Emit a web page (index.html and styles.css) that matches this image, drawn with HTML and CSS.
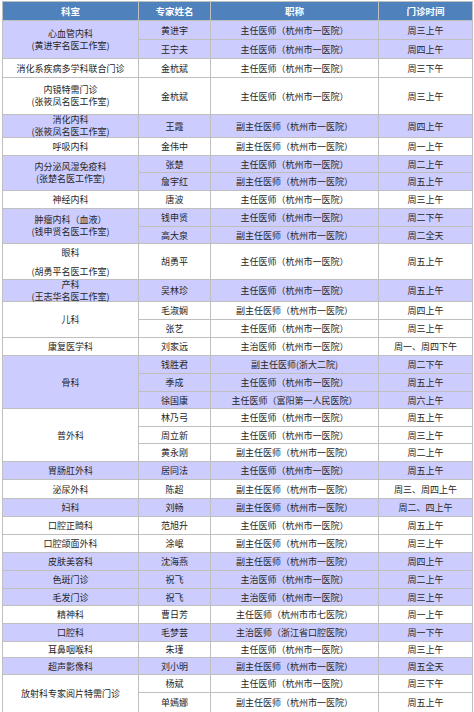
FILE: index.html
```html
<!DOCTYPE html>
<html lang="zh-CN">
<head>
<meta charset="utf-8">
<title>专家门诊时间表</title>
<link rel="stylesheet" href="styles.css">
</head>
<body>
<div class="sheet">
  <div class="c hd">科室</div><div class="c hd">专家姓名</div><div class="c hd">职称</div><div class="c hd">门诊时间</div>

  <div class="c p s2 two">心血管内科<br>(黄进宇名医工作室)</div><div class="c p">黄进宇</div><div class="c p">主任医师（杭州市一医院）</div><div class="c p">周三上午</div>
  <div class="c p">王宁夫</div><div class="c p">主任医师（杭州市一医院）</div><div class="c p">周四上午</div>

  <div class="c w">消化系疾病多学科联合门诊</div><div class="c w">金杭斌</div><div class="c w">主任医师（杭州市一医院）</div><div class="c w">周三下午</div>

  <div class="c w two">内镜特需门诊<br>(张筱凤名医工作室)</div><div class="c w">金杭斌</div><div class="c w">主任医师（杭州市一医院）</div><div class="c w">周三上午</div>

  <div class="c p two">消化内科<br>(张筱凤名医工作室)</div><div class="c p">王霞</div><div class="c p">副主任医师（杭州市一医院）</div><div class="c p">周四上午</div>

  <div class="c w">呼吸内科</div><div class="c w">金伟中</div><div class="c w">副主任医师（杭州市一医院）</div><div class="c w">周一上午</div>

  <div class="c p s2 two">内分泌风湿免疫科<br>(张楚名医工作室)</div><div class="c p">张楚</div><div class="c p">主任医师（杭州市一医院）</div><div class="c p">周二上午</div>
  <div class="c p">詹宇红</div><div class="c p">副主任医师（杭州市一医院）</div><div class="c p">周五上午</div>

  <div class="c w">神经内科</div><div class="c w">唐波</div><div class="c w">主任医师（杭州市一医院）</div><div class="c w">周三上午</div>

  <div class="c p s2 two">肿瘤内科（血液）<br>(钱申贤名医工作室)</div><div class="c p">钱申贤</div><div class="c p">主任医师（杭州市一医院）</div><div class="c p">周二下午</div>
  <div class="c p">高大泉</div><div class="c p">副主任医师（杭州市一医院）</div><div class="c p">周二全天</div>

  <div class="c w two wide">眼科<br>(胡勇平名医工作室)</div><div class="c w">胡勇平</div><div class="c w">主任医师（杭州市一医院）</div><div class="c w">周五上午</div>

  <div class="c p two">产科<br>(王志华名医工作室)</div><div class="c p">吴林珍</div><div class="c p">主任医师（杭州市一医院）</div><div class="c p">周五上午</div>

  <div class="c w s2">儿科</div><div class="c w">毛淑娴</div><div class="c w">副主任医师（杭州市一医院）</div><div class="c w">周四上午</div>
  <div class="c w">张艺</div><div class="c w">主任医师（杭州市一医院）</div><div class="c w">周三上午</div>

  <div class="c w">康复医学科</div><div class="c w">刘家远</div><div class="c w">主治医师（杭州市一医院）</div><div class="c w">周一、周四下午</div>

  <div class="c p s3">骨科</div><div class="c p">钱胜君</div><div class="c p">副主任医师(浙大二院)</div><div class="c p">周二下午</div>
  <div class="c p">季成</div><div class="c p">主任医师（杭州市一医院）</div><div class="c p">周五上午</div>
  <div class="c p">徐国康</div><div class="c p">主任医师（富阳第一人民医院）</div><div class="c p">周六上午</div>

  <div class="c w s3">普外科</div><div class="c w">林乃弓</div><div class="c w">主任医师（杭州市一医院）</div><div class="c w">周五上午</div>
  <div class="c w">周立新</div><div class="c w">主任医师（杭州市一医院）</div><div class="c w">周三上午</div>
  <div class="c w">黄永刚</div><div class="c w">副主任医师（杭州市一医院）</div><div class="c w">周二上午</div>

  <div class="c p">胃肠肛外科</div><div class="c p">居同法</div><div class="c p">主任医师（杭州市一医院）</div><div class="c p">周五上午</div>

  <div class="c w">泌尿外科</div><div class="c w">陈超</div><div class="c w">副主任医师（杭州市一医院）</div><div class="c w">周三、周四上午</div>

  <div class="c p">妇科</div><div class="c p">刘畅</div><div class="c p">副主任医师（杭州市一医院）</div><div class="c p">周二、四上午</div>

  <div class="c w">口腔正畸科</div><div class="c w">范旭升</div><div class="c w">主任医师（杭州市一医院）</div><div class="c w">周五上午</div>

  <div class="c w">口腔颌面外科</div><div class="c w">涂岷</div><div class="c w">副主任医师（杭州市一医院）</div><div class="c w">周三上午</div>

  <div class="c p">皮肤美容科</div><div class="c p">沈海燕</div><div class="c p">副主任医师（杭州市一医院）</div><div class="c p">周四上午</div>

  <div class="c p">色斑门诊</div><div class="c p">祝飞</div><div class="c p">主治医师（杭州市一医院）</div><div class="c p">周二上午</div>

  <div class="c p">毛发门诊</div><div class="c p">祝飞</div><div class="c p">主治医师（杭州市一医院）</div><div class="c p">周三上午</div>

  <div class="c w">精神科</div><div class="c w">曹日芳</div><div class="c w">主任医师（杭州市市七医院）</div><div class="c w">周一上午</div>

  <div class="c p">口腔科</div><div class="c p">毛梦芸</div><div class="c p">主治医师（浙江省口腔医院）</div><div class="c p">周一下午</div>

  <div class="c w">耳鼻咽喉科</div><div class="c w">朱瑾</div><div class="c w">主任医师（杭州市一医院）</div><div class="c w">周三上午</div>

  <div class="c p">超声影像科</div><div class="c p">刘小明</div><div class="c p">副主任医师（杭州市一医院）</div><div class="c p">周五全天</div>

  <div class="c w s2">放射科专家阅片特需门诊</div><div class="c w">杨斌</div><div class="c w">主任医师（杭州市一医院）</div><div class="c w">周三下午</div>
  <div class="c w">单嫣娜</div><div class="c w">副主任医师（杭州市一医院）</div><div class="c w">周五上午</div>
</div>
</body>
</html>
```

FILE: styles.css
```css
html, body {
  margin: 0;
  padding: 0;
  background: #ffffff;
}

body {
  font-family: "Noto Sans CJK SC", "Noto Sans", sans-serif;
  font-size: 9px;
  color: #262626;
}

.sheet {
  display: grid;
  grid-template-columns: 135px 71px 167px 93px;
  grid-template-rows:
    18px
    18px 18px 18px 36px 22px 17px 16px 17px 17px 17px
    16px 35px 21px 17px 17px 17px 17px 17px 16px 17px
    16px 17px 17px 18px 17px 17px 17px 17px 17px 16px
    17px 17px 15px 16px 17px 19px;
  gap: 1px;
  background: #bfbfbf;
  border: 1px solid #bfbfbf;
  width: max-content;
  margin: 1px 0 0 2px;
}

.c {
  display: flex;
  align-items: center;
  justify-content: center;
  text-align: center;
  line-height: 11px;
  white-space: nowrap;
}

.hd {
  background: #4f81bd;
  color: #ffffff;
  font-weight: bold;
  font-size: 9.5px;
}

.p {
  background: #ccccff;
}

.w {
  background: #ffffff;
}

.two {
  line-height: 12px;
}

.wide {
  line-height: 19px;
}

.s2 {
  grid-row: span 2;
}

.s3 {
  grid-row: span 3;
}
```
